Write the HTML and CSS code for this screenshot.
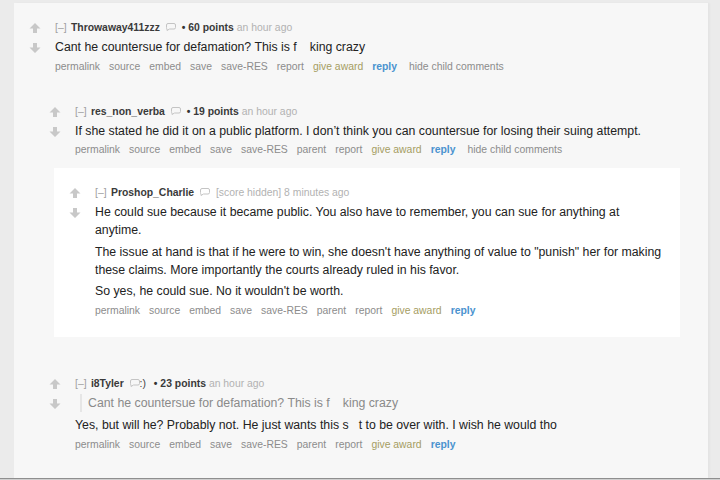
FILE: index.html
```html
<!DOCTYPE html>
<html>
<head>
<meta charset="utf-8">
<link rel="stylesheet" href="styles.css">
</head>
<body>
<div class="page">
  <div class="panel">
    <div class="comment top">
      <div class="row">
        <div class="midcol">
          <svg class="arrow" viewBox="0 0 11 10"><path d="M5.5 0L11 5.5H7.5V10H3.5V5.5H0Z"/></svg>
          <svg class="arrow" viewBox="0 0 11 10"><path d="M5.5 10L11 4.5H7.5V0H3.5V4.5H0Z"/></svg>
        </div>
        <div class="entry">
          <p class="tagline"><span class="expand">[–]</span><span class="author">Throwaway411zzz</span> <svg class="bubble" viewBox="0 0 10 8"><path d="M2 0.5H8A1.5 1.5 0 0 1 9.5 2V4.5A1.5 1.5 0 0 1 8 6H3.5L1 7.5V6A1.5 1.5 0 0 1 0.5 4.5V2A1.5 1.5 0 0 1 2 0.5Z"/></svg> <span class="bullet">•</span> <span class="score">60 points</span> <span class="time">an hour ago</span></p>
          <div class="md"><p>Cant he countersue for defamation? This is f<span class="gap g13"></span>king crazy</p></div>
          <ul class="buttons">
            <li>permalink</li><li>source</li><li>embed</li><li>save</li><li>save-RES</li><li>report</li><li class="award">give award</li><li class="reply">reply</li><li>hide child comments</li>
          </ul>
        </div>
      </div>
      <div class="child">
        <div class="comment">
          <div class="row">
            <div class="midcol">
              <svg class="arrow" viewBox="0 0 11 10"><path d="M5.5 0L11 5.5H7.5V10H3.5V5.5H0Z"/></svg>
              <svg class="arrow" viewBox="0 0 11 10"><path d="M5.5 10L11 4.5H7.5V0H3.5V4.5H0Z"/></svg>
            </div>
            <div class="entry">
              <p class="tagline"><span class="expand">[–]</span><span class="author">res_non_verba</span> <svg class="bubble" viewBox="0 0 10 8"><path d="M2 0.5H8A1.5 1.5 0 0 1 9.5 2V4.5A1.5 1.5 0 0 1 8 6H3.5L1 7.5V6A1.5 1.5 0 0 1 0.5 4.5V2A1.5 1.5 0 0 1 2 0.5Z"/></svg> <span class="bullet">•</span> <span class="score">19 points</span> <span class="time">an hour ago</span></p>
              <div class="md"><p>If she stated he did it on a public platform. I don’t think you can countersue for losing their suing attempt.</p></div>
              <ul class="buttons">
                <li>permalink</li><li>source</li><li>embed</li><li>save</li><li>save-RES</li><li>parent</li><li>report</li><li class="award">give award</li><li class="reply">reply</li><li>hide child comments</li>
              </ul>
            </div>
          </div>
          <div class="child inner">
            <div class="comment boxed">
              <div class="row">
                <div class="midcol">
                  <svg class="arrow" viewBox="0 0 11 10"><path d="M5.5 0L11 5.5H7.5V10H3.5V5.5H0Z"/></svg>
                  <svg class="arrow" viewBox="0 0 11 10"><path d="M5.5 10L11 4.5H7.5V0H3.5V4.5H0Z"/></svg>
                </div>
                <div class="entry">
                  <p class="tagline"><span class="expand">[–]</span><span class="author">Proshop_Charlie</span> <svg class="bubble" viewBox="0 0 10 8"><path d="M2 0.5H8A1.5 1.5 0 0 1 9.5 2V4.5A1.5 1.5 0 0 1 8 6H3.5L1 7.5V6A1.5 1.5 0 0 1 0.5 4.5V2A1.5 1.5 0 0 1 2 0.5Z"/></svg> <span class="time">[score hidden]</span> <span class="time">8 minutes ago</span></p>
                  <div class="md">
                    <p>He could sue because it became public. You also have to remember, you can sue for anything at anytime.</p>
                    <p>The issue at hand is that if he were to win, she doesn't have anything of value to "punish" her for making these claims. More importantly the courts already ruled in his favor.</p>
                    <p>So yes, he could sue. No it wouldn't be worth.</p>
                  </div>
                  <ul class="buttons">
                    <li>permalink</li><li>source</li><li>embed</li><li>save</li><li>save-RES</li><li>parent</li><li>report</li><li class="award">give award</li><li class="reply">reply</li>
                  </ul>
                </div>
              </div>
            </div>
          </div>
        </div>
        <div class="comment last">
          <div class="row">
            <div class="midcol">
              <svg class="arrow" viewBox="0 0 11 10"><path d="M5.5 0L11 5.5H7.5V10H3.5V5.5H0Z"/></svg>
              <svg class="arrow" viewBox="0 0 11 10"><path d="M5.5 10L11 4.5H7.5V0H3.5V4.5H0Z"/></svg>
            </div>
            <div class="entry">
              <p class="tagline"><span class="expand">[–]</span><span class="author">i8Tyler</span> <svg class="bubble tight" viewBox="0 0 10 8"><path d="M2 0.5H8A1.5 1.5 0 0 1 9.5 2V4.5A1.5 1.5 0 0 1 8 6H3.5L1 7.5V6A1.5 1.5 0 0 1 0.5 4.5V2A1.5 1.5 0 0 1 2 0.5Z"/></svg><span class="flair">:)</span> <span class="bullet">•</span> <span class="score">23 points</span> <span class="time">an hour ago</span></p>
              <div class="md">
                <blockquote>Cant he countersue for defamation? This is f<span class="gap g13"></span>king crazy</blockquote>
                <p>Yes, but will he? Probably not. He just wants this s<span class="gap g10"></span>t to be over with. I wish he would tho</p>
              </div>
              <ul class="buttons">
                <li>permalink</li><li>source</li><li>embed</li><li>save</li><li>save-RES</li><li>parent</li><li>report</li><li class="award">give award</li><li class="reply">reply</li>
              </ul>
            </div>
          </div>
        </div>
      </div>
    </div>
  </div>
  <div class="bottom-line"></div>
</div>
</body>
</html>
```

FILE: styles.css
```css
html, body {
  margin: 0;
  padding: 0;
}

body {
  background: #ebebeb;
  font-family: "Liberation Sans", Arial, sans-serif;
}

.page {
  width: 720px;
  height: 480px;
  overflow: hidden;
  display: flex;
  flex-direction: column;
}

.panel {
  margin: 3px 12px 0 14px;
  height: 475px;
  background: #f7f7f7;
  box-shadow: 2px 0 2px rgba(0, 0, 0, 0.03);
  padding-top: 17px;
  padding-left: 15px;
  box-sizing: border-box;
}

.bottom-line {
  height: 1px;
  background: #8f8f8f;
  border-bottom: 1px solid #cfcfcf;
}

.row {
  display: flex;
  align-items: flex-start;
}

.midcol {
  width: 12px;
  flex: none;
  margin-right: 14px;
  padding-top: 3px;
  display: flex;
  flex-direction: column;
  align-items: center;
  gap: 10px;
}

.arrow {
  width: 12px;
  height: 10px;
  display: block;
}

.arrow path {
  fill: #c8c8c8;
}

.entry {
  flex: 1;
  min-width: 0;
}

.tagline {
  margin: 0 0 2px;
  font-size: 10.4px;
  line-height: 16px;
  color: #888;
  white-space: nowrap;
}

.expand {
  color: #a0a0a0;
  margin-right: 4.4px;
}

.author {
  font-weight: bold;
  color: #3a3a3a;
}

.bubble {
  width: 10px;
  height: 8px;
  margin: 0 3px;
  vertical-align: 0px;
}

.bubble.tight {
  margin-right: 0;
}

.bubble path {
  fill: none;
  stroke: #c4c4c4;
  stroke-width: 1;
}

.flair {
  color: #444;
  margin-right: 5px;
}

.bullet {
  color: #333;
  font-weight: bold;
}

.score {
  font-weight: bold;
  color: #3a3a3a;
}

.time {
  color: #b2b2b2;
}

.md {
  max-width: 570px;
  font-size: 12.3px;
  line-height: 18px;
  color: #222;
}

.md p {
  margin: 0;
}

.md p + p {
  margin-top: 3.5px;
}

.md blockquote {
  margin: 2px 0 4px 5px;
  padding-left: 6px;
  border-left: 2px solid #e6e6e6;
  color: #8a8a8a;
}

.gap {
  display: inline-block;
}

.g13 {
  width: 13px;
}

.g10 {
  width: 10px;
}

.buttons {
  list-style: none;
  margin: 2.5px 0 0;
  padding: 0;
  display: flex;
  gap: 9px;
  font-size: 10.4px;
  line-height: 16px;
  color: #8c8c8c;
  white-space: nowrap;
}

.buttons .award {
  color: #a59d62;
}

.buttons .reply {
  color: #4a93cf;
  font-weight: bold;
  margin-right: 3px;
}

.child {
  margin-left: 20px;
}

.child > .comment {
  margin-top: 29px;
}

.child.inner {
  margin-left: 5px;
}

.child.inner > .comment {
  margin-top: 10px;
}

.boxed {
  background: #ffffff;
  margin-right: 28px;
  padding: 17px 0 18.5px 15px;
}

.child > .comment.last {
  margin-top: 39px;
}
```
